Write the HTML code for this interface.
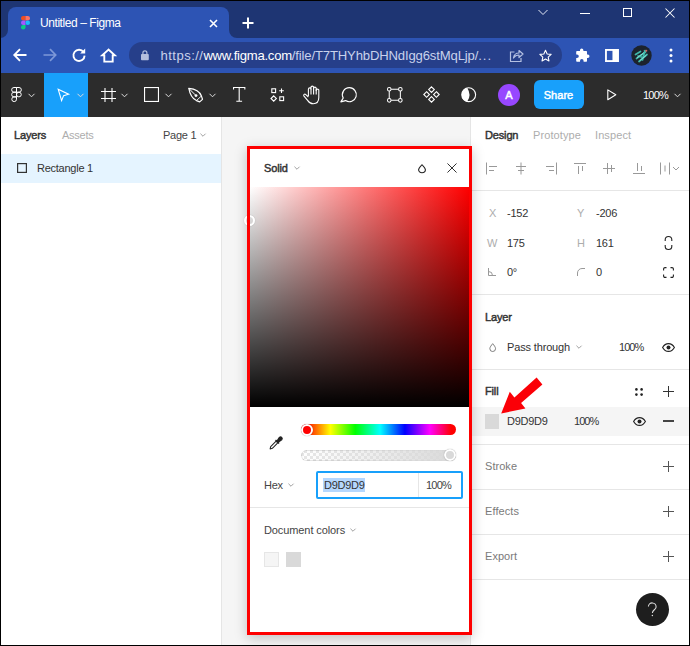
<!DOCTYPE html>
<html>
<head>
<meta charset="utf-8">
<style>
*{box-sizing:border-box;margin:0;padding:0}
html,body{width:690px;height:646px;overflow:hidden;background:#fff;font-family:"Liberation Sans",sans-serif;}
#root{position:relative;width:690px;height:646px;overflow:hidden;background:#fff}
.abs{position:absolute}
.t{position:absolute;white-space:nowrap;font-size:11px;line-height:14px;color:#333;letter-spacing:-0.25px}
.b{font-weight:normal;-webkit-text-stroke:0.45px currentColor;letter-spacing:-0.15px}
.g{color:#adadad}
.hl{position:absolute;height:1px;background:#e6e6e6}
svg{position:absolute;overflow:visible}
/* chrome */
#tabstrip{left:0;top:0;width:690px;height:38.4px;background:#1e3573}
#tab{left:8px;top:7.4px;width:220.6px;height:32px;background:#2d54b4;border-radius:8px 8px 0 0}
#cbar{left:0;top:38.4px;width:690px;height:34.4px;background:#2d54b4}
#url{left:128.7px;top:42.3px;width:433.3px;height:25.8px;border-radius:13px;background:#263f8a}
/* figma toolbar */
#ftb{left:0;top:73px;width:690px;height:44px;background:#2c2c2c}
#fact{left:44px;top:73px;width:44px;height:44px;background:#18a0fb}
/* panels */
#lp{left:0;top:117px;width:222px;height:529px;background:#fff;border-right:1px solid #e5e5e5}
#cv{left:222px;top:117px;width:248px;height:529px;background:#f5f5f5}
#rp{left:470px;top:117px;width:220px;height:529px;background:#fff;border-left:1px solid #e5e5e5}
#frame{left:0;top:0;width:690px;height:646px;border:1px solid #000;pointer-events:none}
</style>
</head>
<body>
<div id="root">
<!-- CHROME TAB STRIP -->
<div id="tabstrip" class="abs"></div>
<div id="tab" class="abs"></div>
<div id="cbar" class="abs"></div>
<div id="url" class="abs"></div>


<!-- tab curves -->
<svg style="left:0;top:30.4px" width="8" height="8" viewBox="0 0 8 8"><path d="M8 0 V8 H0 A8 8 0 0 0 8 0Z" fill="#2d54b4"/></svg>
<svg style="left:228.6px;top:30.4px" width="8" height="8" viewBox="0 0 8 8"><path d="M0 0 V8 H8 A8 8 0 0 1 0 0Z" fill="#2d54b4"/></svg>
<!-- figma favicon -->
<svg style="left:21px;top:16px" width="9" height="13.5" viewBox="0 0 10 15">
<path d="M2.5 0H5V5H2.5A2.5 2.5 0 0 1 2.5 0Z" fill="#f24e1e"/>
<path d="M5 0H7.5A2.5 2.5 0 0 1 7.5 5H5Z" fill="#ff7262"/>
<path d="M2.5 5H5V10H2.5A2.5 2.5 0 0 1 2.5 5Z" fill="#a259ff"/>
<circle cx="7.5" cy="7.5" r="2.5" fill="#1abcfe"/>
<path d="M2.5 10H5V12.5A2.5 2.5 0 1 1 2.5 10Z" fill="#0acf83"/>
</svg>
<div class="t" id="ttl" style="left:40px;top:16px;font-size:12px;color:#fff;letter-spacing:-0.43px">Untitled – Figma</div>
<svg style="left:209px;top:19px" width="9" height="9" viewBox="0 0 9 9"><path d="M1 1L8 8M8 1L1 8" stroke="#fff" stroke-width="1.6" fill="none"/></svg>
<svg style="left:242px;top:17px" width="12" height="12" viewBox="0 0 12 12"><path d="M6 0.5V11.5M0.5 6H11.5" stroke="#fff" stroke-width="2" fill="none"/></svg>
<!-- window controls -->
<svg style="left:538px;top:9px" width="10" height="7" viewBox="0 0 10 7"><path d="M0.5 1L5 5.5L9.5 1" stroke="#e4e9f6" stroke-width="1" fill="none"/></svg>
<div class="abs" style="left:580px;top:13px;width:10px;height:1px;background:#fff"></div>
<svg style="left:623px;top:8px" width="9" height="9" viewBox="0 0 9 9"><rect x="0.5" y="0.5" width="8" height="8" stroke="#fff" stroke-width="1" fill="none"/></svg>
<svg style="left:665px;top:8px" width="10" height="10" viewBox="0 0 10 10"><path d="M0.5 0.5L9.5 9.5M9.5 0.5L0.5 9.5" stroke="#fff" stroke-width="1.05" fill="none"/></svg>
<!-- nav icons -->
<svg style="left:13px;top:48px" width="14" height="14" viewBox="0 0 14 14"><path d="M13.5 7H1.5M7 1.2L1.3 7L7 12.8" stroke="#fff" stroke-width="1.9" fill="none"/></svg>
<svg style="left:43px;top:48px" width="14" height="14" viewBox="0 0 14 14"><path d="M0.5 7H12.5M7 1.2L12.7 7L7 12.8" stroke="#7d98d8" stroke-width="1.7" fill="none"/></svg>
<svg style="left:72px;top:48px" width="14" height="14" viewBox="0 0 14 14"><path d="M11.6 4.2A5.6 5.6 0 1 0 12.6 7.6" stroke="#fff" stroke-width="1.9" fill="none"/><path d="M13.2 0.6V5.6H8.2Z" fill="#fff"/></svg>
<svg style="left:101px;top:47.5px" width="15" height="15" viewBox="0 0 15 15"><path d="M7.5 1.6L1.2 7.4H3.3V13.6H11.7V7.4H13.8Z" stroke="#fff" stroke-width="1.9" fill="none" stroke-linejoin="miter"/></svg>
<!-- lock -->
<svg style="left:141.4px;top:50px" width="7.8" height="10.4" viewBox="0 0 9 12"><rect x="0" y="4.6" width="9" height="7.2" rx="1" fill="#b4bedd"/><path d="M2.2 5V3.3A2.3 2.3 0 0 1 6.8 3.3V5" stroke="#b4bedd" stroke-width="1.4" fill="none"/></svg>
<div class="t" id="urltxt" style="left:160.5px;top:47px;font-size:13.1px;line-height:18px;color:#c9d2ec"><span style="letter-spacing:0.45px">https://</span><span style="color:#fff">www.figma.com</span><span style="letter-spacing:-0.15px">/file/T7THYhbDHNdIgg6stMqLjp/<span style="letter-spacing:1px">...</span></span></div>
<!-- share -->
<svg style="left:509px;top:48px" width="15" height="15" viewBox="0 0 15 15"><path d="M5.5 4H1.5V13.5H12V10" stroke="#b4c0e2" stroke-width="1.2" fill="none"/><path d="M4.5 10C5 6.5 7.5 5 10 5V2.5L14 6L10 9.5V7C8 7 6 7.6 4.5 10Z" stroke="#b4c0e2" stroke-width="1.2" fill="none" stroke-linejoin="round"/></svg>
<!-- star -->
<svg style="left:539px;top:48.5px" width="13" height="13" viewBox="0 0 15 15"><path d="M7.5 1.5L9.4 5.7L14 6.2L10.6 9.3L11.5 13.8L7.5 11.5L3.5 13.8L4.4 9.3L1 6.2L5.6 5.7Z" stroke="#fff" stroke-width="1.25" fill="none" stroke-linejoin="round"/></svg>
<!-- puzzle -->
<svg style="left:575px;top:48px" width="15" height="15" viewBox="0 0 15 15"><path d="M5 2.2A1.7 1.7 0 0 1 8.4 2.2V3H11.3A0.8 0.8 0 0 1 12 3.7V6.5H12.8A1.7 1.7 0 0 1 12.8 9.9H12V13A0.8 0.8 0 0 1 11.3 13.8H8.6V12.9A1.8 1.8 0 0 0 5 12.9V13.8H2A0.8 0.8 0 0 1 1.2 13V10H2A1.8 1.8 0 0 0 2 6.4H1.2V3.7A0.8 0.8 0 0 1 2 3H5Z" fill="#fff"/></svg>
<!-- side panel -->
<svg style="left:605px;top:48.5px" width="14" height="13" viewBox="0 0 15 14"><rect x="1" y="1" width="13" height="12" stroke="#fff" stroke-width="2" fill="none"/><rect x="8" y="1" width="6" height="12" fill="#fff"/></svg>
<!-- avatar -->
<svg style="left:631px;top:45px" width="21" height="21" viewBox="0 0 21 21"><circle cx="10.5" cy="10.5" r="10.2" fill="#1c232d"/><g stroke="#3fb8aa" stroke-width="1.7" stroke-linecap="round" fill="none"><path d="M4.5 9.5L9.5 6.5"/><path d="M5.5 13.5L14.5 7"/><path d="M8 16.5L16 9.5"/><path d="M11.5 15L14 5.5"/><path d="M7 11L12 12.5"/></g><g stroke="#8fe6d8" stroke-width="0.9" stroke-linecap="round"><path d="M6.5 12.5L12.5 8"/><path d="M9.5 15L15 10.5"/></g><circle cx="15.3" cy="5.8" r="1" fill="#d9615e"/></svg>
<!-- dots -->
<svg style="left:669px;top:48px" width="4" height="15" viewBox="0 0 4 15"><circle cx="2" cy="2" r="1.5" fill="#fff"/><circle cx="2" cy="7.5" r="1.5" fill="#fff"/><circle cx="2" cy="13" r="1.5" fill="#fff"/></svg>

<!-- FIGMA TOOLBAR -->
<div id="ftb" class="abs"></div>
<div id="fact" class="abs"></div>


<!-- figma logo -->
<svg style="left:10.5px;top:87px" width="11" height="15" viewBox="0 0 11 15"><g stroke="#fff" stroke-width="1" fill="none">
<path d="M3 0.5H5.5V5.2H3A2.35 2.35 0 0 1 3 0.5Z"/><path d="M5.5 0.5H8A2.35 2.35 0 0 1 8 5.2H5.5Z"/>
<path d="M3 5.2H5.5V9.9H3A2.35 2.35 0 0 1 3 5.2Z"/><circle cx="7.9" cy="7.55" r="2.35"/>
<path d="M3 9.9H5.5V12.2A2.35 2.35 0 1 1 3 9.9Z"/></g></svg>
<svg style="left:28px;top:93px" width="7" height="5" viewBox="0 0 7 5"><path d="M0.5 0.8L3.5 3.8L6.5 0.8" stroke="#dcdcdc" stroke-width="1" fill="none"/></svg>
<!-- move -->
<svg style="left:57px;top:88px" width="13" height="14" viewBox="0 0 13 14"><path d="M1.2 1.2L11.6 6.2L6.6 7.6L4.6 12.6Z" stroke="#fff" stroke-width="1.1" fill="none" stroke-linejoin="miter"/></svg>
<svg style="left:76.5px;top:93px" width="7" height="5" viewBox="0 0 7 5"><path d="M0.5 0.8L3.5 3.8L6.5 0.8" stroke="#dcdcdc" stroke-width="1" fill="none"/></svg>
<!-- frame -->
<svg style="left:101px;top:88px" width="15" height="14" viewBox="0 0 15 14"><path d="M4 0V14M11 0V14M0 3.5H15M0 10.5H15" stroke="#fff" stroke-width="1.1" fill="none"/></svg>
<svg style="left:120.5px;top:93px" width="7" height="5" viewBox="0 0 7 5"><path d="M0.5 0.8L3.5 3.8L6.5 0.8" stroke="#dcdcdc" stroke-width="1" fill="none"/></svg>
<!-- rect -->
<svg style="left:144px;top:87px" width="15" height="15" viewBox="0 0 15 15"><rect x="0.55" y="0.55" width="13.9" height="13.9" stroke="#fff" stroke-width="1.1" fill="none"/></svg>
<svg style="left:165px;top:93px" width="7" height="5" viewBox="0 0 7 5"><path d="M0.5 0.8L3.5 3.8L6.5 0.8" stroke="#dcdcdc" stroke-width="1" fill="none"/></svg>
<!-- pen -->
<svg style="left:188px;top:86.5px" width="16" height="16" viewBox="0 0 16 16"><path d="M0.8 1.4C5.4 1.8 11.4 3.6 13.4 9L14.5 12.3L11.7 14.9L8.4 13.6C4 11.4 1.7 6.4 0.8 1.4Z" stroke="#fff" stroke-width="1.15" fill="none" stroke-linejoin="round"/><path d="M0.8 1.4L7.2 7.8" stroke="#fff" stroke-width="1"/><circle cx="8" cy="8.6" r="1.45" fill="#fff"/><path d="M13.4 9L8.4 13.6" stroke="#fff" stroke-width="0.9"/></svg>
<svg style="left:209px;top:93px" width="7" height="5" viewBox="0 0 7 5"><path d="M0.5 0.8L3.5 3.8L6.5 0.8" stroke="#dcdcdc" stroke-width="1" fill="none"/></svg>
<!-- T -->
<svg style="left:232.7px;top:87.3px" width="12.4" height="14.8" viewBox="0 0 12.4 14.8"><path d="M0.55 2.6V0.55H11.85V2.6M6.2 0.55V14.25M3.3 14.25H9.1" stroke="#fff" stroke-width="1.1" fill="none"/></svg>
<!-- resources -->
<svg style="left:270.5px;top:88px" width="14" height="14" viewBox="0 0 14 14"><g stroke="#fff" stroke-width="1.1" fill="none"><rect x="0.8" y="0.8" width="3.8" height="3.8"/><rect x="8.8" y="8.8" width="3.8" height="3.8"/><path d="M2.7 7.8L5.4 10.5L2.7 13.2L0 10.5Z"/><path d="M10.5 0.4V5M8.2 2.7H12.8"/></g></svg>
<!-- hand -->
<svg style="left:303.3px;top:85px" width="18" height="20" viewBox="0 0 18 20"><path d="M5.4 11V4.2A1.3 1.3 0 0 1 8 4.2V2.4A1.3 1.3 0 0 1 10.6 2.4V3.4A1.3 1.3 0 0 1 13.2 3.4V5.4A1.3 1.3 0 0 1 15.8 5.4V12.6C15.8 16.4 13.6 18.8 10.2 18.8C7.6 18.8 6.2 17.8 4.8 15.6L0.8 10.8C0.2 9.6 1.6 8.6 2.8 9.6L5.4 12" stroke="#fff" stroke-width="1.1" fill="none" stroke-linejoin="round"/><path d="M8 4.2V9.6M10.6 3.4V9.6M13.2 4.4V9.6" stroke="#fff" stroke-width="1.1"/></svg>
<!-- comment -->
<svg style="left:339.6px;top:87px" width="17" height="16" viewBox="0 0 17 16"><path d="M9.4 0.7A7 7 0 1 1 5.6 13.6L0.9 14.9L3.2 11A7 7 0 0 1 9.4 0.7Z" stroke="#fff" stroke-width="1.2" fill="none" stroke-linejoin="round"/></svg>
<!-- edit object -->
<svg style="left:386.7px;top:86.7px" width="15.6" height="15.6" viewBox="0 0 16 16"><g stroke="#fff" stroke-width="1.05" fill="none"><path d="M4.2 2.3H11.8M4.2 13.7H11.8M2.3 4.2V11.8M13.7 4.2V11.8"/><circle cx="2.3" cy="2.3" r="1.85"/><circle cx="13.7" cy="2.3" r="1.85"/><circle cx="2.3" cy="13.7" r="1.85"/><circle cx="13.7" cy="13.7" r="1.85"/></g></svg>
<!-- component -->
<svg style="left:423px;top:86px" width="17" height="17" viewBox="0 0 17 17"><g stroke="#fff" stroke-width="1.1" fill="none"><path d="M8.5 0.8L11.3 3.6L8.5 6.4L5.7 3.6Z"/><path d="M8.5 10.6L11.3 13.4L8.5 16.2L5.7 13.4Z"/><path d="M3.6 5.7L6.4 8.5L3.6 11.3L0.8 8.5Z"/><path d="M13.4 5.7L16.2 8.5L13.4 11.3L10.6 8.5Z"/></g></svg>
<!-- mask -->
<svg style="left:460.6px;top:86.8px" width="15.4" height="15.4" viewBox="0 0 16 16"><circle cx="8" cy="8" r="7.2" stroke="#fff" stroke-width="1.15" fill="none"/><path d="M6.5 0.96A7.2 7.2 0 0 0 6.5 15.04A12.7 12.7 0 0 0 6.5 0.96Z" fill="#fff"/></svg>
<!-- avatar -->
<div class="abs" style="left:497.8px;top:83.7px;width:22px;height:22px;border-radius:11px;background:#9747ff"></div>
<div class="t b" style="left:497.8px;top:87.8px;width:22px;text-align:center;color:#fff;font-size:11px">A</div>
<!-- share -->
<div class="abs" style="left:533.5px;top:79.8px;width:50px;height:29.5px;border-radius:6px;background:#18a0fb"></div>
<div class="t b" id="sharet" style="left:533.5px;top:88px;width:50px;text-align:center;color:#fff;font-size:11px;letter-spacing:0.05px">Share</div>
<!-- play -->
<svg style="left:606.5px;top:89px" width="10" height="12" viewBox="0 0 10 12"><path d="M0.8 0.9L8.8 5.8L0.8 10.7Z" stroke="#fff" stroke-width="1.1" fill="none" stroke-linejoin="round"/></svg>
<div class="t" id="zoomt" style="left:643px;top:88px;color:#fff;font-size:11px;letter-spacing:-0.75px">100%</div>
<svg style="left:674px;top:93px" width="7" height="5" viewBox="0 0 7 5"><path d="M0.5 0.8L3.5 3.8L6.5 0.8" stroke="#dcdcdc" stroke-width="1" fill="none"/></svg>

<!-- PANELS -->
<div id="lp" class="abs"></div>
<div id="cv" class="abs"></div>
<div id="rp" class="abs"></div>


<!-- LEFT PANEL -->
<div class="t b" style="left:14px;top:128px">Layers</div>
<div class="t g" style="left:62px;top:128px">Assets</div>
<div class="t" style="left:163px;top:128px;color:#444">Page 1</div>
<svg style="left:199.5px;top:133.3px" width="6" height="4.3" viewBox="0 0 7 5"><path d="M0.5 0.8L3.5 3.8L6.5 0.8" stroke="#9a9a9a" stroke-width="1.1" fill="none"/></svg>
<div class="abs" style="left:1px;top:154px;width:220px;height:29px;background:#e5f4ff"></div>
<svg style="left:17px;top:163px" width="10" height="10" viewBox="0 0 10 10"><rect x="0.6" y="0.6" width="8.8" height="8.8" stroke="#333" stroke-width="1.2" fill="none"/></svg>
<div class="t" id="rect1" style="left:37px;top:161px">Rectangle 1</div>

<!-- RIGHT PANEL -->
<div class="t b" style="left:485px;top:128px">Design</div>
<div class="t g" style="left:533px;top:128px;letter-spacing:0.1px">Prototype</div>
<div class="t g" style="left:595px;top:128px;letter-spacing:0.1px">Inspect</div>
<!-- align icons -->
<g id="align"></g>
<svg style="left:485px;top:162px" width="200" height="13" viewBox="0 0 200 13"><g stroke="#999" stroke-width="1" fill="none">
<path d="M1.5 0.5V12.5M4 4.5H12M4 8.5H9"/>
<path d="M36 0.5V12.5M31 4.5H41M33 8.5H39"/>
<path d="M71.5 0.5V12.5M61 4.5H69M64 8.5H69"/>
<path d="M89 1.5H101M93.5 4V12M97.5 4V9"/>
<path d="M118 6.5H130M122.5 1V12M126.5 3V10"/>
<path d="M148 11.5H160M152.5 1V9M156.5 4V9"/>
<path d="M175.5 0.5V12.5M184.5 0.5V12.5M180 3.5V9.5"/>
<path d="M188 5L191 8L194 5"/>
</g></svg>
<div class="hl" style="left:471px;top:190px;width:218px"></div>
<div class="t g" style="left:489px;top:206px">X</div><div class="t" style="left:507px;top:206px">-152</div>
<div class="t g" style="left:577px;top:206px">Y</div><div class="t" style="left:596px;top:206px">-206</div>
<div class="t g" style="left:487px;top:236px">W</div><div class="t" style="left:507px;top:236px">175</div>
<div class="t g" style="left:577px;top:236px">H</div><div class="t" style="left:596px;top:236px">161</div>
<svg style="left:488px;top:268px" width="8" height="8" viewBox="0 0 8 8"><path d="M0.5 0V7.5H8M0.5 3.5A4 4 0 0 1 4.5 7.5" stroke="#999" stroke-width="1" fill="none"/></svg>
<div class="t" style="left:507px;top:265px">0°</div>
<svg style="left:577px;top:268px" width="8" height="8" viewBox="0 0 8 8"><path d="M0.5 8V5A4.5 4.5 0 0 1 5 0.5H8" stroke="#999" stroke-width="1" fill="none"/></svg>
<div class="t" style="left:596px;top:265px">0</div>
<!-- link -->
<svg style="left:664px;top:236px" width="9" height="14" viewBox="0 0 9 14"><path d="M1.2 5V3.8A3.3 3.3 0 0 1 7.8 3.8V5M1.2 9V10.2A3.3 3.3 0 0 0 7.8 10.2V9" stroke="#222" stroke-width="1.1" fill="none"/></svg>
<svg style="left:663px;top:267px" width="11" height="11" viewBox="0 0 11 11"><path d="M0.6 3.5V2A1.4 1.4 0 0 1 2 0.6H3.5M7.5 0.6H9A1.4 1.4 0 0 1 10.4 2V3.5M10.4 7.5V9A1.4 1.4 0 0 1 9 10.4H7.5M3.5 10.4H2A1.4 1.4 0 0 1 0.6 9V7.5" stroke="#222" stroke-width="1.1" fill="none"/></svg>
<div class="hl" style="left:471px;top:294px;width:218px"></div>
<div class="t b" style="left:485px;top:309.8px">Layer</div>
<svg style="left:488.5px;top:343px" width="7.4" height="9.2" viewBox="0 0 8 11"><path d="M4 0.8C5.6 2.8 7.4 4.8 7.4 6.8A3.4 3.4 0 0 1 0.6 6.8C0.6 4.8 2.4 2.8 4 0.8Z" stroke="#666" stroke-width="1" fill="none"/></svg>
<div class="t" style="left:507px;top:340px;letter-spacing:-0.15px">Pass through</div>
<svg style="left:575.5px;top:345.3px" width="6" height="4.3" viewBox="0 0 7 5"><path d="M0.5 0.8L3.5 3.8L6.5 0.8" stroke="#9a9a9a" stroke-width="1.1" fill="none"/></svg>
<div class="t" style="left:619px;top:340px;letter-spacing:-0.95px">100%</div>
<svg style="left:661.5px;top:342.5px" width="13" height="9" viewBox="0 0 13 9"><path d="M0.6 4.5C2 2 4 0.6 6.5 0.6S11 2 12.4 4.5C11 7 9 8.4 6.5 8.4S2 7 0.6 4.5Z" stroke="#222" stroke-width="1.1" fill="none"/><circle cx="6.5" cy="4.5" r="2" fill="#222"/></svg>
<div class="hl" style="left:471px;top:369px;width:218px"></div>
<div class="t b" style="left:485px;top:384.3px">Fill</div>
<svg style="left:635px;top:387.5px" width="8" height="8" viewBox="0 0 8 8"><g fill="#222"><circle cx="1.4" cy="1.4" r="1.3"/><circle cx="6.6" cy="1.4" r="1.3"/><circle cx="1.4" cy="6.6" r="1.3"/><circle cx="6.6" cy="6.6" r="1.3"/></g></svg>
<svg style="left:662.5px;top:386px" width="11" height="11" viewBox="0 0 11 11"><path d="M5.5 0V11M0 5.5H11" stroke="#333" stroke-width="1" fill="none"/></svg>
<div class="abs" style="left:471px;top:407px;width:218px;height:29px;background:#f5f5f5"></div>
<div class="abs" style="left:485px;top:414px;width:14px;height:15px;background:#d9d9d9"></div>
<div class="t" style="left:507px;top:414px">D9D9D9</div>
<div class="t" style="left:574px;top:414px;letter-spacing:-0.95px">100%</div>
<svg style="left:632.5px;top:416.5px" width="13" height="9" viewBox="0 0 13 9"><path d="M0.6 4.5C2 2 4 0.6 6.5 0.6S11 2 12.4 4.5C11 7 9 8.4 6.5 8.4S2 7 0.6 4.5Z" stroke="#222" stroke-width="1.1" fill="none"/><circle cx="6.5" cy="4.5" r="2" fill="#222"/></svg>
<div class="abs" style="left:663px;top:420.3px;width:11px;height:1.4px;background:#444"></div>
<div class="hl" style="left:471px;top:444px;width:218px"></div>
<div class="t" style="left:485px;top:458.8px;color:#7a7a7a;letter-spacing:0.05px">Stroke</div>
<svg style="left:662.5px;top:460.5px" width="11" height="11" viewBox="0 0 11 11"><path d="M5.5 0V11M0 5.5H11" stroke="#555" stroke-width="1" fill="none"/></svg>
<div class="hl" style="left:471px;top:489px;width:218px"></div>
<div class="t" style="left:485px;top:503.8px;color:#7a7a7a;letter-spacing:0.1px">Effects</div>
<svg style="left:662.5px;top:505.5px" width="11" height="11" viewBox="0 0 11 11"><path d="M5.5 0V11M0 5.5H11" stroke="#555" stroke-width="1" fill="none"/></svg>
<div class="hl" style="left:471px;top:534px;width:218px"></div>
<div class="t" style="left:485px;top:548.9px;color:#7a7a7a;letter-spacing:0.05px">Export</div>
<svg style="left:662.5px;top:550.5px" width="11" height="11" viewBox="0 0 11 11"><path d="M5.5 0V11M0 5.5H11" stroke="#555" stroke-width="1" fill="none"/></svg>
<div class="hl" style="left:471px;top:579px;width:218px"></div>
<!-- help -->
<div class="abs" style="left:635.9px;top:592.7px;width:33px;height:33px;border-radius:17px;background:#1e1e1e"></div>
<svg style="left:644px;top:600px" width="17" height="18" viewBox="644 600 17 18"><path d="M648.4 606.6A3.85 3.85 0 0 1 656.1 606.9C656.1 609.7 652.4 609.9 652.4 613.1" stroke="#e0e0e0" stroke-width="1.05" fill="none"/><circle cx="652.4" cy="615.6" r="0.75" fill="#e0e0e0"/></svg>
<!-- red arrow -->
<svg style="left:495px;top:375px" width="50" height="45" viewBox="495 375 50 45"><path d="M501.2 413.5L509.8 391.7L514.4 397.5L536.6 377.5L542.4 384.5L521.1 403L525.4 408.4Z" fill="#fb0007"/></svg>


<!-- COLOR PICKER POPUP -->
<div class="abs" style="left:247px;top:146px;width:225px;height:489px;border:3px solid #fe0000;box-shadow:0 3px 12px rgba(0,0,0,0.22)"></div>
<div class="abs" style="left:250px;top:149px;width:219px;height:483px;background:#fff"></div>
<div class="t b" style="left:264px;top:161px">Solid</div>
<svg style="left:294.0px;top:166.3px" width="6" height="4.3" viewBox="0 0 7 5"><path d="M0.5 0.8L3.5 3.8L6.5 0.8" stroke="#9a9a9a" stroke-width="1.1" fill="none"/></svg>
<svg style="left:418.1px;top:163.8px" width="8" height="9.4" viewBox="0 0 8 11" preserveAspectRatio="none"><path d="M4 0.8C5.6 2.8 7.4 4.8 7.4 6.8A3.4 3.4 0 0 1 0.6 6.8C0.6 4.8 2.4 2.8 4 0.8Z" stroke="#222" stroke-width="1.1" fill="none"/></svg>
<svg style="left:446.7px;top:163.3px" width="10" height="10" viewBox="0 0 11 11"><path d="M0.5 0.5L10.5 10.5M10.5 0.5L0.5 10.5" stroke="#333" stroke-width="1.1" fill="none"/></svg>
<div class="abs" style="left:250px;top:187px;width:219px;height:220px;background:linear-gradient(to bottom,rgba(0,0,0,0),#000),linear-gradient(to right,#fff,#f00)"></div>
<div class="abs" style="left:244px;top:214.5px;width:11px;height:11px;border-radius:6px;border:2px solid #fff;box-shadow:0 0 1px rgba(0,0,0,0.3)"></div>
<div class="abs" style="left:247px;top:187px;width:3px;height:220px;background:#fe0000"></div>
<!-- eyedropper -->
<svg style="left:268.5px;top:436.2px" width="14" height="14" viewBox="0 0 15 15"><path d="M1.2 13.8L1.8 11.4L7.6 5.6L9.4 7.4L3.6 13.2Z" stroke="#222" stroke-width="1.1" fill="none" stroke-linejoin="round"/><path d="M7 4.2L10.8 8M8.6 5.4L11.2 1.6A1.7 1.7 0 0 1 13.6 4L9.8 6.6Z" stroke="#222" stroke-width="1.4" fill="#222" stroke-linejoin="round"/></svg>
<!-- hue -->
<div class="abs" style="left:301px;top:424px;width:155px;height:11px;border-radius:6px;background:linear-gradient(to right,#f00 3%,#ff0 19%,#0f0 35%,#0ff 51%,#00f 67%,#f0f 83%,#f00 97%)"></div>
<div class="abs" style="left:300.5px;top:423.5px;width:12px;height:12px;border-radius:6px;background:#f00;border:2px solid #fff;box-shadow:0 0 1px rgba(0,0,0,0.4)"></div>
<!-- opacity -->
<div class="abs" style="left:301px;top:450px;width:155px;height:11px;border-radius:6px;overflow:hidden;background-color:#fff;background-image:linear-gradient(45deg,#e6e6e6 25%,transparent 25%,transparent 75%,#e6e6e6 75%),linear-gradient(45deg,#e6e6e6 25%,transparent 25%,transparent 75%,#e6e6e6 75%);background-size:6px 6px;background-position:0 0,3px 3px;box-shadow:inset 0 0 0 1px rgba(0,0,0,0.1)"><div style="width:100%;height:100%;background:linear-gradient(to right,rgba(217,217,217,0),rgba(217,217,217,1))"></div></div>
<div class="abs" style="left:444px;top:449px;width:12px;height:12px;border-radius:6px;background:#d9d9d9;border:2px solid #fff;box-shadow:0 0 1px rgba(0,0,0,0.45)"></div>
<!-- hex row -->
<div class="t" style="left:264px;top:478px;color:#444">Hex</div>
<svg style="left:287.5px;top:483.3px" width="6" height="4.3" viewBox="0 0 7 5"><path d="M0.5 0.8L3.5 3.8L6.5 0.8" stroke="#9a9a9a" stroke-width="1.1" fill="none"/></svg>
<div class="abs" style="left:316px;top:471px;width:147px;height:28px;border:2px solid #18a0fb;border-radius:2px;background:#fff"></div>
<div class="abs" style="left:418px;top:473px;width:1px;height:24px;background:#e6e6e6"></div>
<div class="abs" style="left:323px;top:478px;width:42px;height:14px;background:#b5d7fe"></div>
<div class="t" id="hext" style="left:324px;top:478px;color:#333">D9D9D9</div>
<div class="t" style="left:426px;top:478px;color:#444;letter-spacing:-0.8px">100%</div>
<div class="hl" style="left:250px;top:507px;width:219px"></div>
<div class="t" style="left:264px;top:523px;color:#444;letter-spacing:-0.1px">Document colors</div>
<svg style="left:350.0px;top:528.3px" width="6" height="4.3" viewBox="0 0 7 5"><path d="M0.5 0.8L3.5 3.8L6.5 0.8" stroke="#9a9a9a" stroke-width="1.1" fill="none"/></svg>
<div class="abs" style="left:264px;top:552px;width:15px;height:15px;background:#f5f5f5;box-shadow:inset 0 0 0 1px #e6e6e6"></div>
<div class="abs" style="left:286px;top:552px;width:15px;height:15px;background:#d9d9d9"></div>

<div id="frame" class="abs"></div>
</div>
</body>
</html>
